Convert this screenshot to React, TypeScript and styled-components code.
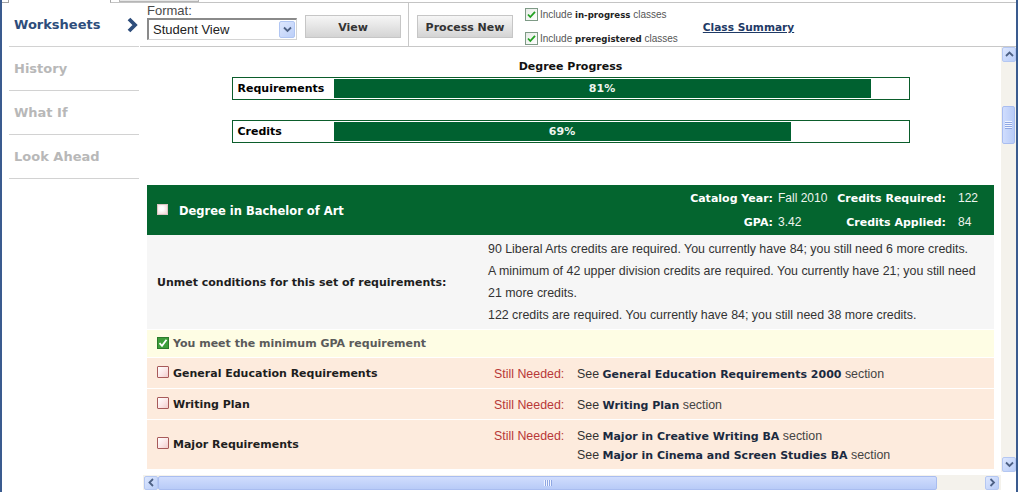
import React from "react";
import styled, { createGlobalStyle } from "styled-components";

const GlobalStyle = createGlobalStyle`
  html, body { margin: 0; padding: 0; background: #fff; }
  body { font-family: "Liberation Sans", Arial, sans-serif; overflow: hidden; }
  * { box-sizing: border-box; }
`;

const BOLD = `"DejaVu Sans", Verdana, sans-serif`;
const REG = `"Liberation Sans", Arial, sans-serif`;
const GREEN = "#04652f";

const Page = styled.div`
  width: 1018px;
  height: 492px;
  display: flex;
  flex-direction: column;
  border-left: 2px solid #3a5b8f;
  border-right: 2px solid #3a5b8f;
  background: #fff;
  overflow: hidden;
`;

const TopStrip = styled.div`
  height: 3px;
  display: flex;
  flex: none;
`;

const TabCorner = styled.div`
  width: 7px;
  height: 3px;
  border-right: 1px solid #a4a4a4;
  border-bottom: 1px solid #a4a4a4;
`;

const TabLine = styled.div`
  flex: 1;
  margin-left: 101px;
  height: 3px;
  border-left: 1px solid #a8a8a8;
  border-bottom: 1px solid #c4c4c4;
  display: flex;
`;

const TabStub = styled.div`
  margin-left: 8px;
  width: 80px;
  height: 2px;
  background: #e6e6e6;
  border: 1px solid #b6b6b6;
  border-top: none;
`;

const Body = styled.div`
  flex: 1;
  display: flex;
  min-height: 0;
`;

const Sidebar = styled.nav`
  width: 138px;
  flex: none;
  display: flex;
  flex-direction: column;
`;

const NavItem = styled.div<{ $active?: boolean }>`
  height: 44px;
  margin-left: 7px;
  margin-right: 1px;
  border-bottom: 1px solid #d2d2d2;
  display: flex;
  align-items: center;
  justify-content: space-between;
  padding: 0 1px 0 5px;
  font-family: ${BOLD};
  font-weight: bold;
  font-size: 13px;
  color: ${(p) => (p.$active ? "#2e4d7b" : "#b8b8b8")};
`;

const Main = styled.div`
  flex: 1;
  display: flex;
  flex-direction: column;
  min-width: 0;
`;

const Toolbar = styled.div`
  height: 44px;
  flex: none;
  border-bottom: 1px solid #c8c8c8;
  display: flex;
  align-items: flex-start;
  padding-left: 7px;
`;

const FormatGroup = styled.div`
  display: flex;
  flex-direction: column;
  width: 150px;
`;

const FormatLabel = styled.div`
  font-family: ${REG};
  font-size: 13px;
  line-height: 15px;
  height: 15px;
  color: #4a4a4a;
`;

const SelectBox = styled.div`
  height: 22px;
  display: flex;
  align-items: center;
  justify-content: space-between;
  border-top: 2px solid #8a8a8a;
  border-left: 2px solid #8a8a8a;
  border-bottom: 1px solid #d4d4d4;
  border-right: 1px solid #d4d4d4;
  background: #fff;
  padding-left: 4px;
  padding-right: 1px;
  font-family: ${REG};
  font-size: 13px;
  color: #222;
`;

const SelectArrow = styled.div`
  width: 16px;
  height: 17px;
  border: 1px solid #b1c6f3;
  border-radius: 2px;
  background: linear-gradient(135deg, #dde7fe, #bccff8);
  display: flex;
  align-items: center;
  justify-content: center;
`;

const Button = styled.div<{ $gap: number }>`
  margin-top: 12px;
  margin-left: ${(p) => p.$gap}px;
  width: 96px;
  height: 23px;
  padding-top: 2px;
  border: 1px solid #c6c6c6;
  background: linear-gradient(#f6f6f6, #d4d4d4);
  display: flex;
  align-items: center;
  justify-content: center;
  font-family: ${BOLD};
  font-weight: bold;
  font-size: 11px;
  color: #333;
`;

const VDivider = styled.div`
  width: 1px;
  align-self: stretch;
  background: #c8c8c8;
  margin-left: 7px;
`;

const CheckGroup = styled.div`
  margin-left: 12px;
  margin-top: 5px;
  display: flex;
  flex-direction: column;
  gap: 11px;
`;

const CheckRow = styled.div`
  display: flex;
  align-items: center;
  gap: 2px;
  height: 13px;
  font-family: ${REG};
  font-size: 10px;
  color: #555;
  white-space: nowrap;
`;

const CheckStrong = styled.b`
  font-family: ${BOLD};
  font-size: 8.6px;
  color: #222;
`;

const SummaryLink = styled.a`
  margin-left: 25px;
  margin-top: 17px;
  line-height: 14px;
  font-family: ${BOLD};
  font-weight: bold;
  font-size: 10.6px;
  color: #1f3a66;
  text-decoration: underline;
`;

const ViewRow = styled.div`
  flex: 1;
  display: flex;
  min-height: 0;
`;

const Content = styled.div`
  flex: 1;
  overflow: hidden;
  padding: 0 7px;
`;

const ProgressTitle = styled.div`
  padding-top: 13px;
  margin-bottom: 3px;
  text-align: center;
  font-family: ${BOLD};
  font-weight: bold;
  font-size: 11px;
  line-height: 14px;
  color: #111;
`;

const ProgressBox = styled.div<{ $top: number }>`
  width: 678px;
  height: 23px;
  margin: ${(p) => p.$top}px auto 0;
  border: 1px solid #0b5d2b;
  display: flex;
`;

const ProgressLabel = styled.div`
  width: 101px;
  flex: none;
  padding-left: 5px;
  font-family: ${BOLD};
  font-weight: bold;
  font-size: 11px;
  line-height: 21px;
  color: #000;
`;

const ProgressFill = styled.div`
  margin: 1px 0;
  background: #006130;
  color: #eef5ee;
  text-align: center;
  font-family: ${BOLD};
  font-weight: bold;
  font-size: 11px;
  line-height: 19px;
`;

const DegreeBlock = styled.div`
  margin-top: 42px;
  display: flex;
  flex-direction: column;
`;

const HeaderBar = styled.div`
  height: 50px;
  display: flex;
  align-items: center;
  background: ${GREEN};
  color: #fff;
  padding: 0 8px 0 10px;
`;

const HeaderTitle = styled.div`
  flex: 1;
  display: flex;
  align-items: center;
  gap: 11px;
  margin-top: 2px;
  font-family: ${BOLD};
  font-weight: bold;
  font-size: 11.5px;
`;

const HeaderBox = styled.span`
  width: 11px;
  height: 11px;
  margin-top: -3px;
  border: 1px solid #dcc4c4;
  background: radial-gradient(circle at 40% 40%, #ffffff 25%, #f0d2d2 100%);
`;

const HeaderGrid = styled.div`
  display: grid;
  grid-template-columns: auto 58px 122px 28px;
  grid-auto-rows: 24px;
  align-items: center;
`;

const HLabel = styled.span<{ $pad: number }>`
  text-align: right;
  padding-right: ${(p) => p.$pad}px;
  font-family: ${BOLD};
  font-weight: bold;
  font-size: 11px;
  white-space: nowrap;
`;

const HValue = styled.span`
  font-family: ${REG};
  font-size: 12px;
  color: #eef4ee;
  white-space: nowrap;
`;

const tones = { grey: "#f6f6f6", yellow: "#fefde4", peach: "#fdebdd" };

const Row = styled.div<{ $tone: keyof typeof tones; $sep?: boolean }>`
  display: flex;
  background: ${(p) => tones[p.$tone]};
  margin-top: ${(p) => (p.$sep ? 1 : 0)}px;
`;

const LeftCell = styled.div<{ $muted?: boolean }>`
  width: 339px;
  flex: none;
  padding-left: 10px;
  display: flex;
  align-items: center;
  gap: 4px;
  font-family: ${BOLD};
  font-weight: bold;
  font-size: 11px;
  color: ${(p) => (p.$muted ? "#5a5a5a" : "#1e1e1e")};
  white-space: nowrap;
`;

const GpaCell = styled(LeftCell)`
  width: auto;
  flex: 1;
  height: 27px;
`;

const ConditionList = styled.div`
  flex: 1;
  padding: 3px 10px 3px 2px;
  font-family: ${REG};
  font-size: 12.4px;
  line-height: 22px;
  color: #333;
`;

const Condition = styled.p`
  margin: 0;
`;

const ReqRight = styled.div`
  flex: 1;
  display: flex;
  align-items: flex-start;
  padding: 7px 0 4px 8px;
  font-family: ${REG};
  font-size: 12.4px;
  line-height: 19px;
  color: #444;
`;

const Needed = styled.span`
  width: 83px;
  height: 19px;
  flex: none;
  color: #b83838;
`;

const SeeList = styled.div`
  display: flex;
  flex-direction: column;
`;

const SeeLine = styled.div`
  height: 19px;
  white-space: nowrap;
`;

const SeeWord = styled.span`
  color: #333;
`;

const SeeName = styled.b`
  font-family: ${BOLD};
  font-size: 11px;
  line-height: 19px;
  color: #1b2a3f;
`;

const RowBox = styled.span`
  width: 12px;
  height: 12px;
  flex: none;
  margin-top: -3px;
  border: 1px solid #a85a5a;
  border-radius: 1px;
  background: linear-gradient(135deg, #ffffff 0%, #fbe6e6 55%, #f0cccc 100%);
`;

const VScroll = styled.div`
  width: 15px;
  flex: none;
  display: flex;
  flex-direction: column;
  background: #f4f2ec;
`;

const ScrollBtn = styled.div<{ $end?: boolean }>`
  width: 14px;
  height: 15px;
  flex: none;
  margin-left: 1px;
  margin-top: ${(p) => (p.$end ? "auto" : "0")};
  border: 1px solid #b4c7f2;
  border-radius: 2px;
  background: linear-gradient(135deg, #dde7fe, #b9cdf8);
  display: flex;
  align-items: center;
  justify-content: center;
`;

const VThumb = styled.div`
  width: 13px;
  height: 38px;
  margin: 44px 0 0 1px;
  border: 1px solid #a9bdf0;
  border-radius: 2px;
  background: linear-gradient(90deg, #d0ddfd, #b8cbf7);
  display: flex;
  align-items: center;
  justify-content: center;
`;

const VGrip = styled.div`
  width: 7px;
  height: 8px;
  background: repeating-linear-gradient(to bottom, #f0f4ff 0 1px, #8fa7e3 1px 2px);
`;

const HRow = styled.div`
  height: 20px;
  flex: none;
  display: flex;
`;

const HScroll = styled.div`
  width: 858px;
  height: 15px;
  margin: 3px 0 2px 3px;
  background: #f4f2ec;
  display: flex;
  align-items: center;
`;

const HBtn = styled.div<{ $right?: boolean }>`
  width: 14px;
  height: 14px;
  flex: none;
  margin-left: ${(p) => (p.$right ? "auto" : "1px")};
  margin-right: ${(p) => (p.$right ? "2px" : "0")};
  border: 1px solid #b4c7f2;
  border-radius: 2px;
  background: linear-gradient(135deg, #dde7fe, #b9cdf8);
  display: flex;
  align-items: center;
  justify-content: center;
`;

const HThumb = styled.div`
  width: 779px;
  height: 14px;
  border: 1px solid #a9bdf0;
  border-radius: 2px;
  background: linear-gradient(#d0ddfd, #b8cbf7);
  display: flex;
  align-items: center;
  justify-content: center;
`;

const HGrip = styled.div`
  width: 8px;
  height: 6px;
  background: repeating-linear-gradient(to right, #f0f4ff 0 1px, #8fa7e3 1px 2px);
`;

const Chevron = () => (
  <svg width="12" height="16" viewBox="0 0 12 16">
    <polyline points="3,2 9,8 3,14" fill="none" stroke="#2e4d7b" strokeWidth="3.8" strokeLinejoin="miter" />
  </svg>
);

const Arrow = ({ dir }: { dir: "up" | "down" | "left" | "right" }) => {
  const pts = {
    up: "1,5 4.5,1.5 8,5",
    down: "1,1.5 4.5,5 8,1.5",
    left: "5,1 1.5,4.5 5,8",
    right: "1.5,1 5,4.5 1.5,8",
  }[dir];
  const vertical = dir === "up" || dir === "down";
  return (
    <svg width={vertical ? 9 : 7} height={vertical ? 7 : 9} viewBox={vertical ? "0 0 9 7" : "0 0 7 9"}>
      <polyline points={pts} fill="none" stroke="#4d6185" strokeWidth="1.8" />
    </svg>
  );
};

const ToolCheck = () => (
  <svg width="13" height="13" viewBox="0 0 13 13">
    <defs>
      <linearGradient id="tc" x1="0" y1="0" x2="1" y2="1">
        <stop offset="0" stopColor="#e6ebe6" />
        <stop offset="1" stopColor="#ffffff" />
      </linearGradient>
    </defs>
    <rect x="0.5" y="0.5" width="12" height="12" fill="url(#tc)" stroke="#7e9a86" />
    <polyline points="3,6.5 5.3,9 10,3.8" fill="none" stroke="#21a121" strokeWidth="1.8" />
  </svg>
);

const GreenCheck = () => (
  <svg width="12" height="12" viewBox="0 0 12 12" style={{ flex: "none", marginTop: -2 }}>
    <rect x="0.5" y="0.5" width="11" height="11" fill="#3d9e3a" stroke="#2b7a2b" />
    <polyline points="2.5,6.2 5,8.8 9.5,2.8" fill="none" stroke="#ffffff" strokeWidth="1.8" />
  </svg>
);

const progress = [
  { label: "Requirements", pct: 81 },
  { label: "Credits", pct: 69 },
];

const conditions = [
  "90 Liberal Arts credits are required. You currently have 84; you still need 6 more credits.",
  "A minimum of 42 upper division credits are required. You currently have 21; you still need 21 more credits.",
  "122 credits are required. You currently have 84; you still need 38 more credits.",
];

const requirements = [
  { name: "General Education Requirements", see: ["General Education Requirements 2000"] },
  { name: "Writing Plan", see: ["Writing Plan"] },
  { name: "Major Requirements", see: ["Major in Creative Writing BA", "Major in Cinema and Screen Studies BA"] },
];

export default function App() {
  return (
    <>
      <GlobalStyle />
      <Page>
        <TopStrip>
          <TabCorner />
          <TabLine>
            <TabStub />
          </TabLine>
        </TopStrip>
        <Body>
          <Sidebar>
            <NavItem $active>
              Worksheets
              <Chevron />
            </NavItem>
            <NavItem>History</NavItem>
            <NavItem>What If</NavItem>
            <NavItem>Look Ahead</NavItem>
          </Sidebar>
          <Main>
            <Toolbar>
              <FormatGroup>
                <FormatLabel>Format:</FormatLabel>
                <SelectBox>
                  Student View
                  <SelectArrow>
                    <Arrow dir="down" />
                  </SelectArrow>
                </SelectBox>
              </FormatGroup>
              <Button $gap={8}>View</Button>
              <VDivider />
              <Button $gap={8}>Process New</Button>
              <CheckGroup>
                <CheckRow>
                  <ToolCheck />
                  <span>
                    Include <CheckStrong>in-progress</CheckStrong> classes
                  </span>
                </CheckRow>
                <CheckRow>
                  <ToolCheck />
                  <span>
                    Include <CheckStrong>preregistered</CheckStrong> classes
                  </span>
                </CheckRow>
              </CheckGroup>
              <SummaryLink>Class Summary</SummaryLink>
            </Toolbar>
            <ViewRow>
              <Content>
                <ProgressTitle>Degree Progress</ProgressTitle>
                {progress.map((p, i) => (
                  <ProgressBox key={p.label} $top={i === 0 ? 0 : 20}>
                    <ProgressLabel>{p.label}</ProgressLabel>
                    <ProgressFill style={{ width: `${Math.round(p.pct * 6.63)}px` }}>{p.pct}%</ProgressFill>
                  </ProgressBox>
                ))}
                <DegreeBlock>
                  <HeaderBar>
                    <HeaderTitle>
                      <HeaderBox />
                      Degree in Bachelor of Art
                    </HeaderTitle>
                    <HeaderGrid>
                      <HLabel $pad={5}>Catalog Year:</HLabel>
                      <HValue>Fall 2010</HValue>
                      <HLabel $pad={12}>Credits Required:</HLabel>
                      <HValue>122</HValue>
                      <HLabel $pad={5}>GPA:</HLabel>
                      <HValue>3.42</HValue>
                      <HLabel $pad={12}>Credits Applied:</HLabel>
                      <HValue>84</HValue>
                    </HeaderGrid>
                  </HeaderBar>
                  <Row $tone="grey">
                    <LeftCell>Unmet conditions for this set of requirements:</LeftCell>
                    <ConditionList>
                      {conditions.map((c) => (
                        <Condition key={c}>{c}</Condition>
                      ))}
                    </ConditionList>
                  </Row>
                  <Row $tone="yellow" $sep>
                    <GpaCell $muted>
                      <GreenCheck />
                      You meet the minimum GPA requirement
                    </GpaCell>
                  </Row>
                  {requirements.map((r) => (
                    <Row $tone="peach" $sep key={r.name}>
                      <LeftCell>
                        <RowBox />
                        {r.name}
                      </LeftCell>
                      <ReqRight>
                        <Needed>Still Needed:</Needed>
                        <SeeList>
                          {r.see.map((s) => (
                            <SeeLine key={s}>
                              <SeeWord>See </SeeWord>
                              <SeeName>{s}</SeeName> section
                            </SeeLine>
                          ))}
                        </SeeList>
                      </ReqRight>
                    </Row>
                  ))}
                </DegreeBlock>
              </Content>
              <VScroll>
                <ScrollBtn>
                  <Arrow dir="up" />
                </ScrollBtn>
                <VThumb>
                  <VGrip />
                </VThumb>
                <ScrollBtn $end>
                  <Arrow dir="down" />
                </ScrollBtn>
              </VScroll>
            </ViewRow>
            <HRow>
              <HScroll>
                <HBtn>
                  <Arrow dir="left" />
                </HBtn>
                <HThumb>
                  <HGrip />
                </HThumb>
                <HBtn $right>
                  <Arrow dir="right" />
                </HBtn>
              </HScroll>
            </HRow>
          </Main>
        </Body>
      </Page>
    </>
  );
}
